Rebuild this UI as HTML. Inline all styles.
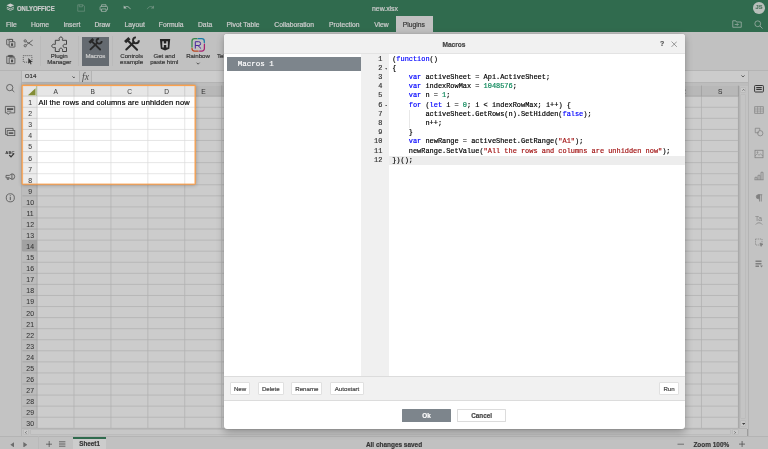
<!DOCTYPE html><html><head><meta charset="utf-8"><title>new.xlsx</title><style>
*{box-sizing:border-box;margin:0;padding:0}
html,body{width:768px;height:449px;overflow:hidden;background:#c4c4c4;font-family:"Liberation Sans",sans-serif;color:#444}
.abs{position:absolute}
#app{position:absolute;left:0;top:0;width:768px;height:449px;overflow:hidden;will-change:transform;filter:blur(0.35px);-webkit-text-stroke:0.18px}
#hdr{left:0;top:0;width:768px;height:31.8px;background:#3d8662}
.tab{position:absolute;top:20.5px;font-size:6.75px;line-height:8px;color:#fff;white-space:nowrap}
#tb{left:0;top:31.8px;width:768px;height:39.2px;background:#f2f2f2;border-bottom:1px solid #e2e2e2}
.sep{position:absolute;top:36.4px;height:29.6px;width:1px;background:#e9e9e9}
.btxt{position:absolute;font-size:6.1px;line-height:6.5px;text-align:center;color:#444;white-space:nowrap;transform:translateX(-50%)}
#fbar{left:21.6px;top:71px;width:726px;height:12px;background:#fff;border-bottom:1px solid #e2e2e2}
#lside{left:0;top:71px;width:21.6px;height:364.8px;background:#f4f4f4;border-right:1px solid #e2e2e2}
#rside{left:747.5px;top:71px;width:20.5px;height:364.8px;background:#f4f4f4;border-left:1px solid #e2e2e2}
#sbar{left:0;top:435.8px;width:768px;height:13.2px;background:#f2f2f2;border-top:1px solid #e2e2e2}
.ch{-webkit-text-stroke:0.06px;position:absolute;font-size:6.6px;line-height:10.8px;margin-top:1.1px;padding-left:0.5px;text-align:center;color:#444}
.rh{-webkit-text-stroke:0.06px;position:absolute;font-size:6.9px;line-height:11.07px;margin-top:1px;padding-left:0.8px;text-align:center;color:#444}
#dlg{left:223.5px;top:34.3px;width:461px;height:394.8px;background:#fff;border-radius:3px;box-shadow:0 2.8px 8.3px rgba(0,0,0,0.3),0 0 1px rgba(0,0,0,0.2);overflow:hidden}
.dbtn{position:absolute;top:348px;height:13px;background:#fff;border:1px solid #e0e0e0;border-radius:1px;font-size:6.15px;line-height:12.4px;text-align:center;color:#444;overflow:hidden}
.code{position:absolute;left:0;font-family:"Liberation Mono",monospace;font-size:6.93px;line-height:9.19px;white-space:pre;color:#000}
.ln{position:absolute;width:21px;text-align:right;font-family:"Liberation Mono",monospace;font-size:6.89px;line-height:9.19px;color:#333}
.k{color:#0000ff}.n{color:#098658}.s{color:#a31515}
</style></head><body><div id="app">
<div id="hdr" class="abs">
<svg class="abs" style="left:5.900px;top:3.400px" width="8.700" height="8.400" viewBox="0 0 17 17" preserveAspectRatio="none"><g fill="none" stroke="#fff" stroke-width="1.7" stroke-linejoin="round"><path d="M1.5 11.6 8.5 15l7-3.4"/><path d="M1.5 8.4 8.5 11.8l7-3.4"/></g><path d="M8.5 1 16 4.7 8.5 8.4 1 4.7z" fill="#fff"/></svg>
<div class="abs" style="left:17px;top:4.750px;font-size:6.700px;line-height:8px;font-weight:bold;color:#fff;transform-origin:0 50%;transform:scaleX(0.885)">ONLYOFFICE</div>
<svg class="abs" style="left:76.6px;top:4.2px;opacity:.4" width="8.4" height="8" viewBox="0 0 17 16"><path d="M1.5 1.5h10.5l3.5 3.2v9.8h-14z M4.5 1.5v4h6.5v-4" fill="none" stroke="#fff" stroke-width="1.4"/></svg>
<svg class="abs" style="left:99.4px;top:4px;opacity:.8" width="9.600" height="8.400" viewBox="0 0 18 17"><g fill="none" stroke="#fff" stroke-width="1.5"><path d="M4.5 5V1.5h9V5"/><rect x="1.5" y="5" width="15" height="7.5" rx="1.5"/><path d="M4.5 10h9v5.5h-9z" fill="#3d8662"/></g></svg>
<svg class="abs" style="left:122.600px;top:5.400px;opacity:.85" width="8.600" height="6.200" viewBox="0 0 16 12"><path d="M2 5.5c3-3.5 8.5-4 12 2.5" fill="none" stroke="#fff" stroke-width="1.6"/><path d="M1 1v6h6z" fill="#fff"/></svg>
<svg class="abs" style="left:146.200px;top:5.400px;opacity:.4" width="8.600" height="6.200" viewBox="0 0 16 12"><path d="M14 5.5c-3-3.5-8.5-4-12 2.5" fill="none" stroke="#fff" stroke-width="1.6"/><path d="M15 1v6h-6z" fill="#fff"/></svg>
<div class="abs" style="left:335px;top:4.800px;width:100px;text-align:center;font-size:6.900px;line-height:8px;color:#fff">new.xlsx</div>
<div class="abs" style="left:753.2px;top:2.1px;width:11.6px;height:11.6px;border-radius:50%;background:#e6efe9;color:#5f8f74;font-size:5.6px;line-height:11.8px;text-align:center;font-weight:bold">JS</div>
<div class="abs" style="left:396px;top:16px;width:36.500px;height:16px;background:#f2f2f2"></div>
<div class="tab" style="left:6.0px">File</div>
<div class="tab" style="left:30.9px">Home</div>
<div class="tab" style="left:63.4px">Insert</div>
<div class="tab" style="left:94.4px">Draw</div>
<div class="tab" style="left:124.6px">Layout</div>
<div class="tab" style="left:158.8px">Formula</div>
<div class="tab" style="left:198.0px">Data</div>
<div class="tab" style="left:226.6px">Pivot Table</div>
<div class="tab" style="left:274.3px">Collaboration</div>
<div class="tab" style="left:329.0px">Protection</div>
<div class="tab" style="left:374.2px">View</div>
<div class="tab" style="left:402.8px;color:#444">Plugins</div>
<svg class="abs" style="left:731.6px;top:20.2px;opacity:.75" width="10" height="8" viewBox="0 0 20 16"><path d="M1.5 14.5v-13h6l1.5 2.5h9.5v10.5z" fill="none" stroke="#fff" stroke-width="1.5"/><path d="M5.5 9h7m-2.5-2.5 2.5 2.5-2.5 2.5" fill="none" stroke="#fff" stroke-width="1.4"/></svg>
<svg class="abs" style="left:754.4px;top:19.6px;opacity:.75" width="9" height="9" viewBox="0 0 18 18"><circle cx="7.5" cy="7.5" r="5.8" fill="none" stroke="#fff" stroke-width="1.5"/><path d="M12 12l5 5" stroke="#fff" stroke-width="1.6"/></svg>
</div>
<div id="tb" class="abs"></div>
<div class="sep" style="left:39.5px"></div>
<div class="sep" style="left:78.2px"></div>
<div class="sep" style="left:112.3px"></div>
<div class="abs" style="left:82.2px;top:36.6px;width:27px;height:29.8px;background:#7d858c"></div>
<svg class="abs" style="left:0;top:0" width="768" height="449" viewBox="0 0 768 449"><g fill="none" stroke="#636363" stroke-width="0.85"><path d="M9 41.5V39.4h3.7v2.1"/><rect x="6.7" y="39.4" width="5.8" height="5.5" rx=".4"/><rect x="9.2" y="41.7" width="5.7" height="5.4" rx=".4" fill="#f2f2f2"/><rect x="11" y="43.3" width="2.1" height="2.6" fill="#666" stroke="none"/><circle cx="25.2" cy="40.9" r="1.15"/><circle cx="25.2" cy="45.7" r="1.15"/><path d="M26.2 41.6 32.6 45.6M26.2 45 32.6 40.2"/><path d="M8.8 56.2H6.8v7.2h2.3"/><path d="M8.6 55.4h3.8v1.4H8.600z" fill="#555"/><path d="M12.300 56.200h1.700v1.600"/><rect x="9.200" y="57.900" width="5.700" height="5.800" rx=".4" fill="#f2f2f2"/><rect x="11" y="59.600" width="2.100" height="2.700" fill="#666" stroke="none"/><path d="M23.300 55.600h8.600v6.600h-8.600z" stroke-dasharray="1.1 0.9" stroke-width=".8"/><path d="M28.300 58v5.800l1.400-1.300 1 2 .9-.5-1-1.900h1.800z" fill="#444" stroke="none"/></g><path d="M55.300 40.300H59.400V39.600A1.750 1.750 0 1 1 62.400 39.600V40.300H66.500V44.400H65.600A1.750 1.750 0 1 0 65.600 47.500H66.500V51.500H62.500V50.600A1.750 1.750 0 1 0 59.300 50.600V51.500H55.300V47.500H54.400A1.750 1.750 0 1 1 54.400 44.400H55.300Z" fill="none" stroke="#444" stroke-width="0.9" stroke-linejoin="round"/><g transform="translate(95.40 44.60) scale(1.000)" stroke="#333" fill="none"><path d="M-3.600 -3.300 4.700 4.900" stroke-width="1.850" stroke-linecap="round"/><path d="M-6 -1.800-2.100-5.500" stroke-width="2.700"/><path d="M-4.900 4.700 1.900-1.700" stroke-width="1.850" stroke-linecap="round"/><path d="M3.700-6.100A2.600 2.600 0 1 0 6.300-3.500" stroke-width="1.750"/></g><g transform="translate(131.80 44.20) scale(1.120)" stroke="#333" fill="none"><path d="M-3.600 -3.300 4.700 4.900" stroke-width="1.850" stroke-linecap="round"/><path d="M-6 -1.800-2.100-5.500" stroke-width="2.700"/><path d="M-4.900 4.700 1.900-1.700" stroke-width="1.850" stroke-linecap="round"/><path d="M3.700-6.100A2.600 2.600 0 1 0 6.300-3.500" stroke-width="1.750"/></g><path d="M159.900 39h10.300l-.9 9.800-4.250 1.800-4.250-1.800z" fill="#2e2e2e"/><path d="M162.300 41.300h1.500v2.300h2.500v-2.300h1.500v6.100h-1.500v-2.400h-2.500v2.400h-1.500z" fill="#fff"/><g fill="none" stroke-width="1.250" stroke-linecap="round"><path d="M192 47V41.200a2.500 2.500 0 0 1 2.500-2.500H197" stroke="#43a85a"/><path d="M198.200 38.700h3.600a2.500 2.500 0 0 1 2.500 2.500v1.300" stroke="#1d9bd1"/><path d="M204.400 44.200v4.300a2.500 2.500 0 0 1-2.500 2.500H199.600" stroke="#cf2a8c"/><path d="M198.200 51h-3.700a2.500 2.500 0 0 1-2.500-2.500v-.2" stroke="#ea5a2c"/><path d="M195.300 48.600V41.700h3.400a1.900 1.900 0 0 1 0 3.800h-3.400M198 45.600l3.100 3" stroke="#5a2fc2" stroke-width="1" stroke-linecap="butt"/></g><path d="M196.600 62.700l1.500 1.500 1.500-1.500" fill="none" stroke="#444" stroke-width=".8"/></svg>
<div class="btxt" style="left:59.300px;top:52.800px">Plugin<br>Manager</div>
<div class="btxt" style="left:95.400px;top:52.800px;color:#fff">Macros</div>
<div class="btxt" style="left:131.600px;top:52.800px">Controls<br>example</div>
<div class="btxt" style="left:164.300px;top:52.800px">Get and<br>paste html</div>
<div class="btxt" style="left:198px;top:52.800px">Rainbow</div>
<div class="btxt" style="left:217px;top:52.800px;transform:none;text-align:left">Telegram</div>
<div id="fbar" class="abs"></div>
<div class="abs" style="left:21.600px;top:71px;width:58.400px;height:11px;border-right:1px solid #e2e2e2;font-size:6.100px;line-height:10.600px;padding-left:3.200px;color:#444">O14</div>
<svg class="abs" style="left:71.700px;top:75.900px" width="3.800" height="2.500" viewBox="0 0 9 6"><path d="M1 1l3.500 3.500L8 1" fill="none" stroke="#444" stroke-width="1.900"/></svg>
<div class="abs" style="left:80px;top:71px;width:12px;height:11px;overflow:hidden;border-right:1px solid #e2e2e2;background:#fafafa;font-family:'Liberation Serif',serif;font-style:italic;font-size:9.600px;line-height:11.600px;text-align:center;color:#606060;-webkit-text-stroke:0">fx</div>
<svg class="abs" style="left:741px;top:75px" width="4" height="2.600" viewBox="0 0 9 6"><path d="M1 1l3.500 3.500L8 1" fill="none" stroke="#444" stroke-width="1.800"/></svg>
<div class="abs" style="left:21.600px;top:83px;width:726px;height:2.600px;background:#ededed"></div>
<div class="abs" style="left:22.40px;top:85.50px;width:716.10px;height:342.80px;background:#fff"></div>
<div class="abs" style="left:22.40px;top:85.50px;width:716.10px;height:10.70px;background:#e6e6e6"></div>
<div class="abs" style="left:22.40px;top:96.20px;width:14.70px;height:332.10px;background:#ececec"></div>
<div class="abs" style="left:22.40px;top:240.11px;width:14.70px;height:11.07px;background:#cbcbcb"></div>
<svg class="abs" style="left:0;top:0" width="768" height="449" viewBox="0 0 768 449"><path d="M37.10 107.27H738.50M37.10 118.34H738.50M37.10 129.41H738.50M37.10 140.48H738.50M37.10 151.55H738.50M37.10 162.62H738.50M37.10 173.69H738.50M37.10 184.76H738.50M37.10 195.83H738.50M37.10 206.90H738.50M37.10 217.97H738.50M37.10 229.04H738.50M37.10 240.11H738.50M37.10 251.18H738.50M37.10 262.25H738.50M37.10 273.32H738.50M37.10 284.39H738.50M37.10 295.46H738.50M37.10 306.53H738.50M37.10 317.60H738.50M37.10 328.67H738.50M37.10 339.74H738.50M37.10 350.81H738.50M37.10 361.88H738.50M37.10 372.95H738.50M37.10 384.02H738.50M37.10 395.09H738.50M37.10 406.16H738.50M37.10 417.23H738.50M37.10 428.30H738.50M74.01 96.20V428.30M110.92 96.20V428.30M147.83 96.20V428.30M184.74 96.20V428.30M221.65 96.20V428.30M258.56 96.20V428.30M295.47 96.20V428.30M332.38 96.20V428.30M369.29 96.20V428.30M406.20 96.20V428.30M443.11 96.20V428.30M480.02 96.20V428.30M516.93 96.20V428.30M553.84 96.20V428.30M590.75 96.20V428.30M627.66 96.20V428.30M664.57 96.20V428.30M701.48 96.20V428.30M738.39 96.20V428.30" fill="none" stroke="#dbdbdb" stroke-width="0.7"/><path d="M22.40 107.27H37.10M22.40 118.34H37.10M22.40 129.41H37.10M22.40 140.48H37.10M22.40 151.55H37.10M22.40 162.62H37.10M22.40 173.69H37.10M22.40 184.76H37.10M22.40 195.83H37.10M22.40 206.90H37.10M22.40 217.97H37.10M22.40 229.04H37.10M22.40 240.11H37.10M22.40 251.18H37.10M22.40 262.25H37.10M22.40 273.32H37.10M22.40 284.39H37.10M22.40 295.46H37.10M22.40 306.53H37.10M22.40 317.60H37.10M22.40 328.67H37.10M22.40 339.74H37.10M22.40 350.81H37.10M22.40 361.88H37.10M22.40 372.95H37.10M22.40 384.02H37.10M22.40 395.09H37.10M22.40 406.16H37.10M22.40 417.23H37.10M22.40 428.30H37.10M74.01 85.50V96.20M110.92 85.50V96.20M147.83 85.50V96.20M184.74 85.50V96.20M221.65 85.50V96.20M258.56 85.50V96.20M295.47 85.50V96.20M332.38 85.50V96.20M369.29 85.50V96.20M406.20 85.50V96.20M443.11 85.50V96.20M480.02 85.50V96.20M516.93 85.50V96.20M553.84 85.50V96.20M590.75 85.50V96.20M627.66 85.50V96.20M664.57 85.50V96.20M701.48 85.50V96.20M738.39 85.50V96.20M37.10 85.50V428.30M22.40 96.20H738.50" fill="none" stroke="#c4c4c4" stroke-width="0.7"/></svg>
<svg class="abs" style="left:22.40px;top:85.50px" width="14.70" height="10.70" viewBox="0 0 14.6 10.8"><path d="M13.500 2.300v7H5.900z" fill="#838d36"/><path d="M0 10.500H14.500V0" fill="none" stroke="#a9c088" stroke-width="0.8"/></svg>
<div class="ch" style="left:37.10px;top:85.50px;width:36.91px">A</div>
<div class="ch" style="left:74.01px;top:85.50px;width:36.91px">B</div>
<div class="ch" style="left:110.92px;top:85.50px;width:36.91px">C</div>
<div class="ch" style="left:147.83px;top:85.50px;width:36.91px">D</div>
<div class="ch" style="left:184.74px;top:85.50px;width:36.91px">E</div>
<div class="ch" style="left:221.65px;top:85.50px;width:36.91px">F</div>
<div class="ch" style="left:258.56px;top:85.50px;width:36.91px">G</div>
<div class="ch" style="left:295.47px;top:85.50px;width:36.91px">H</div>
<div class="ch" style="left:332.38px;top:85.50px;width:36.91px">I</div>
<div class="ch" style="left:369.29px;top:85.50px;width:36.91px">J</div>
<div class="ch" style="left:406.20px;top:85.50px;width:36.91px">K</div>
<div class="ch" style="left:443.11px;top:85.50px;width:36.91px">L</div>
<div class="ch" style="left:480.02px;top:85.50px;width:36.91px">M</div>
<div class="ch" style="left:516.93px;top:85.50px;width:36.91px">N</div>
<div class="ch" style="left:553.84px;top:85.50px;width:36.91px">O</div>
<div class="ch" style="left:590.75px;top:85.50px;width:36.91px">P</div>
<div class="ch" style="left:627.66px;top:85.50px;width:36.91px">Q</div>
<div class="ch" style="left:664.57px;top:85.50px;width:36.91px">R</div>
<div class="ch" style="left:701.48px;top:85.50px;width:36.91px">S</div>
<div class="rh" style="left:22.40px;top:96.20px;width:14.70px">1</div>
<div class="rh" style="left:22.40px;top:107.27px;width:14.70px">2</div>
<div class="rh" style="left:22.40px;top:118.34px;width:14.70px">3</div>
<div class="rh" style="left:22.40px;top:129.41px;width:14.70px">4</div>
<div class="rh" style="left:22.40px;top:140.48px;width:14.70px">5</div>
<div class="rh" style="left:22.40px;top:151.55px;width:14.70px">6</div>
<div class="rh" style="left:22.40px;top:162.62px;width:14.70px">7</div>
<div class="rh" style="left:22.40px;top:173.69px;width:14.70px">8</div>
<div class="rh" style="left:22.40px;top:184.76px;width:14.70px">9</div>
<div class="rh" style="left:22.40px;top:195.83px;width:14.70px">10</div>
<div class="rh" style="left:22.40px;top:206.90px;width:14.70px">11</div>
<div class="rh" style="left:22.40px;top:217.97px;width:14.70px">12</div>
<div class="rh" style="left:22.40px;top:229.04px;width:14.70px">13</div>
<div class="rh" style="left:22.40px;top:240.11px;width:14.70px">14</div>
<div class="rh" style="left:22.40px;top:251.18px;width:14.70px">15</div>
<div class="rh" style="left:22.40px;top:262.25px;width:14.70px">16</div>
<div class="rh" style="left:22.40px;top:273.32px;width:14.70px">17</div>
<div class="rh" style="left:22.40px;top:284.39px;width:14.70px">18</div>
<div class="rh" style="left:22.40px;top:295.46px;width:14.70px">19</div>
<div class="rh" style="left:22.40px;top:306.53px;width:14.70px">20</div>
<div class="rh" style="left:22.40px;top:317.60px;width:14.70px">21</div>
<div class="rh" style="left:22.40px;top:328.67px;width:14.70px">22</div>
<div class="rh" style="left:22.40px;top:339.74px;width:14.70px">23</div>
<div class="rh" style="left:22.40px;top:350.81px;width:14.70px">24</div>
<div class="rh" style="left:22.40px;top:361.88px;width:14.70px">25</div>
<div class="rh" style="left:22.40px;top:372.95px;width:14.70px">26</div>
<div class="rh" style="left:22.40px;top:384.02px;width:14.70px">27</div>
<div class="rh" style="left:22.40px;top:395.09px;width:14.70px">28</div>
<div class="rh" style="left:22.40px;top:406.16px;width:14.70px">29</div>
<div class="rh" style="left:22.40px;top:417.23px;width:14.70px">30</div>
<div class="abs" style="left:38.600px;top:97.10px;font-size:7.500px;letter-spacing:0.150px;line-height:11.070px;color:#000;white-space:nowrap">All the rows and columns are unhidden now</div>
<div class="abs" style="left:738.500px;top:85.500px;width:9px;height:343px;background:#f4f4f4;border-left:1px solid #e2e2e2"></div>
<div class="abs" style="left:739.800px;top:86.600px;width:6.600px;height:6.600px;background:#fcfcfc;border:1px solid #ebebeb;border-radius:1px"></div>
<svg class="abs" style="left:741.500px;top:89px" width="3.200" height="2" viewBox="0 0 8 5"><path d="M1 4l3-3 3 3" fill="none" stroke="#555" stroke-width="1.600"/></svg>
<div class="abs" style="left:739.800px;top:94.200px;width:6.600px;height:324.600px;background:#f5f5f5;border:1px solid #ebebeb;border-radius:1px"></div>
<div class="abs" style="left:739.800px;top:419.800px;width:6.600px;height:6.800px;background:#fcfcfc;border:1px solid #ebebeb;border-radius:1px"></div>
<svg class="abs" style="left:741.600px;top:422.600px" width="3.200" height="2" viewBox="0 0 8 5"><path d="M0 0h8L4 5z" fill="#555"/></svg>
<div class="abs" style="left:22.400px;top:428.400px;width:725.100px;height:7.400px;background:#f4f4f4;border-top:1px solid #e2e2e2"></div>
<div class="abs" style="left:22.600px;top:428.900px;width:6.900px;height:6.600px;background:#fcfcfc;border:1px solid #ebebeb;border-radius:1px"></div>
<svg class="abs" style="left:25.200px;top:430.600px" width="2" height="3.200" viewBox="0 0 5 8"><path d="M4 1 1 4l3 3" fill="none" stroke="#555" stroke-width="1.600"/></svg>
<div class="abs" style="left:30.400px;top:429.200px;width:700.600px;height:6px;background:#f9f9f9;border:1px solid #ebebeb;border-radius:1px"></div>
<div class="abs" style="left:731.800px;top:428.900px;width:7.400px;height:6.600px;background:#fcfcfc;border:1px solid #ebebeb;border-radius:1px"></div>
<svg class="abs" style="left:734.400px;top:430.600px" width="2" height="3.200" viewBox="0 0 5 8"><path d="M1 1l3 3-3 3" fill="none" stroke="#555" stroke-width="1.600"/></svg>
<div id="lside" class="abs"></div>
<div id="rside" class="abs"></div>
<svg class="abs" style="left:0;top:0" width="768" height="449" viewBox="0 0 768 449"><g fill="none" stroke="#6c6c6c" stroke-width="0.85"><circle cx="9.700" cy="87.600" r="3.150"/><path d="M12 89.900l2.300 2.100"/><path d="M5.400 106.400h9.300v6.500H9.600l-1.300 1.600-1-1.600H5.400z"/><path d="M7 108.300h6.200v1.600H7z" fill="#555" stroke="none"/><path d="M7 111.200h4.300" stroke-width=".7"/><path d="M7 134.500H5.500v-6.100h7.600v1.900"/><rect x="7.200" y="130.600" width="7.600" height="5" /><path d="M8.700 132.300h4.600v1.600H8.700z" fill="#666" stroke="none"/><text x="10" y="153.600" font-family="Liberation Sans, sans-serif" font-size="4.300" font-weight="bold" text-anchor="middle" fill="#444" stroke="none">ABC</text><path d="M9.300 155l1.700 1.800 3-3.300" stroke-width="1.150" stroke="#444"/><path d="M6 175.400h3.300l2.600-1.500v5.400l-2.600-1.500H6z"/><path d="M11.900 173.800a2.800 2.800 0 0 1 0 5.600"/><path d="M7.300 177.800v1.700h1.400v-1.700" stroke-width=".75"/><circle cx="10.300" cy="197.800" r="4.050"/><path d="M10.300 196.900v3.200M10.300 195.300v.9" stroke-width=".95"/></g></svg>
<svg class="abs" style="left:753.90px;top:83.60px;opacity:1" width="10" height="10" viewBox="0 0 20 20"><g fill="none" stroke="#444" stroke-width="1.500"><rect x="1.200" y="3" width="17.600" height="13" rx="1.500" stroke-width="2"/><path d="M4.500 7.200h11M4.500 11h11" stroke-width="2.200"/></g></svg>
<svg class="abs" style="left:753.90px;top:105.30px;opacity:0.47" width="10" height="10" viewBox="0 0 20 20"><g fill="none" stroke="#444" stroke-width="1.500"><rect x="1.500" y="3.500" width="17" height="13"/><path d="M1.500 8h17M1.500 12.200h17M7.200 3.500v13M12.800 3.500v13" stroke-width="1.100"/></g></svg>
<svg class="abs" style="left:753.90px;top:127.20px;opacity:0.47" width="10" height="10" viewBox="0 0 20 20"><g fill="none" stroke="#444" stroke-width="1.500"><path d="M10 11.500H2.500v-9h9v5"/><circle cx="12.500" cy="12.500" r="5.300"/></g></svg>
<svg class="abs" style="left:753.90px;top:149.10px;opacity:0.47" width="10" height="10" viewBox="0 0 20 20"><g fill="none" stroke="#444" stroke-width="1.500"><rect x="2" y="2.500" width="16" height="15"/><path d="M2 14l4.500-4.500 3.500 3 3-2.500 5 4" stroke-width="1.200"/><circle cx="7" cy="6.500" r="1" /></g></svg>
<svg class="abs" style="left:753.90px;top:171.00px;opacity:0.47" width="10" height="10" viewBox="0 0 20 20"><g fill="none" stroke="#444" stroke-width="1.500"><path d="M2 17.500v-5h4v5M8 17.500v-9h4v9M14 17.500v-15h4v15M1 17.500h18"/></g></svg>
<svg class="abs" style="left:753.90px;top:192.90px;opacity:0.47" width="10" height="10" viewBox="0 0 20 20"><g fill="none" stroke="#444" stroke-width="1.500"><path d="M11 17V3.500M14.500 17V3.500M16.500 3.500H8.500" stroke-width="1.700"/><path d="M11 3.500H8.500a4 4 0 0 0 0 8H11z" fill="#444"/></g></svg>
<svg class="abs" style="left:753.90px;top:214.80px;opacity:0.47" width="10" height="10" viewBox="0 0 20 20"><g fill="none" stroke="#444" stroke-width="1.500"><text x="9" y="11" font-family="Liberation Sans, sans-serif" font-size="13.500" text-anchor="middle" fill="#444" stroke="none">Ta</text><path d="M3.500 19c3.500-4.500 9.500-4.500 13 0" /></g></svg>
<svg class="abs" style="left:753.90px;top:236.70px;opacity:0.47" width="10" height="10" viewBox="0 0 20 20"><g fill="none" stroke="#444" stroke-width="1.500"><rect x="3" y="4" width="13" height="12" stroke-dasharray="2.500 1.800"/><path d="M12 12l6 3-3 .8-.8 3z" fill="#444"/></g></svg>
<svg class="abs" style="left:753.90px;top:258.60px;opacity:0.47" width="10" height="10" viewBox="0 0 20 20"><g fill="none" stroke="#444" stroke-width="1.500"><path d="M3 3h12v3H3zM3 8h12v3H3zM3 13h7v3H3z" fill="#444" stroke="none"/><path d="M12 13h6l-3 4z" fill="#444" stroke="none"/></g></svg>
<div id="sbar" class="abs"></div>
<svg class="abs" style="left:9.600px;top:441.700px" width="4.600" height="5.600" viewBox="0 0 8 10"><path d="M7.500 0v10L.5 5z" fill="#888"/></svg>
<svg class="abs" style="left:22.900px;top:441.700px" width="4.600" height="5.600" viewBox="0 0 8 10"><path d="M.5 0v10l7-5z" fill="#888"/></svg>
<div class="abs" style="left:38px;top:436.400px;width:1px;height:12.600px;background:#e8e8e8"></div>
<svg class="abs" style="left:46px;top:440.800px" width="6.400" height="6.400" viewBox="0 0 12 12"><path d="M6 0v12M0 6h12" stroke="#555" stroke-width="1.300"/></svg>
<svg class="abs" style="left:59.400px;top:441px" width="6.400" height="6" viewBox="0 0 12 11"><path d="M0 1h12M0 4h12M0 7h12M0 10h12" stroke="#666" stroke-width="1.200"/></svg>
<div class="abs" style="left:73.300px;top:436.600px;width:32.700px;height:12.400px;background:#fff;border-top:2px solid #3d8662;font-size:6.300px;font-weight:bold;line-height:9.600px;text-align:center;color:#444">Sheet1</div>
<div class="abs" style="left:344px;top:440px;width:100px;text-align:center;font-size:6.450px;font-weight:bold;line-height:10px;color:#444">All changes saved</div>
<svg class="abs" style="left:677px;top:441px" width="8" height="6" viewBox="0 0 8 6"><path d="M0.500 3.200H7" stroke="#707070" stroke-width="0.800"/></svg>
<div class="abs" style="left:681.300px;top:440.200px;width:60px;text-align:center;font-size:6.450px;font-weight:bold;line-height:9.600px;color:#444">Zoom 100%</div>
<svg class="abs" style="left:738.900px;top:441.100px" width="6.200" height="6.200" viewBox="0 0 12 12"><path d="M6 0v12M0 6h12" stroke="#606060" stroke-width="1.500"/></svg>
<div class="abs" style="left:22px;top:85px;width:173px;height:99px;box-shadow:0 0 0 2000px rgba(0,0,0,0.2),0 0 4.500px 0.500px rgba(0,0,0,0.28)"></div>
<svg class="abs" style="left:0;top:0" width="768" height="449" viewBox="0 0 768 449"><rect x="22.200" y="85.350" width="173" height="98.950" rx="0.800" fill="none" stroke="#e8944a" stroke-opacity=".18" stroke-width="2.400"/><rect x="22.200" y="85.350" width="173" height="98.950" rx="0.800" fill="none" stroke="#fba04c" stroke-width="1.150"/></svg>
<div id="dlg" class="abs">
<div class="abs" style="left:0;top:0;width:461px;height:19.300px;background:#f1f1f1;border-bottom:1px solid #e3e3e3;font-size:6.600px;font-weight:bold;line-height:22.200px;text-align:center;color:#444;overflow:hidden">Macros</div>
<div class="abs" style="left:436.600px;top:4.400px;font-size:7px;font-weight:bold;line-height:9px;color:#555">?</div>
<svg class="abs" style="left:447.200px;top:6.700px" width="6.400" height="6.400" viewBox="0 0 12 12"><path d="M1 1l10 10M11 1 1 11" stroke="#666" stroke-width="1.200"/></svg>
<div class="abs" style="left:3px;top:22.500px;width:134.600px;height:13.900px;overflow:hidden;background:#7d858c;color:#fff;font-family:'Liberation Mono',monospace;font-size:7.500px;line-height:15.300px;padding-left:11.200px">Macros 1</div>
<div class="abs" style="left:137.800px;top:19.900px;width:28px;height:322.100px;background:#f0f0f0"></div>
<div class="abs" style="left:165.800px;top:121.49px;width:296px;height:9.190px;background:#ededed"></div>
<div class="abs" style="left:185.600px;top:75.54px;width:0.5px;height:18.400px;background:#e8e8e8"></div>
<div class="ln" style="left:137.800px;top:20.40px">1</div>
<div class="code" style="left:168.700px;top:20.40px">(<span class="k">function</span>()</div>
<div class="ln" style="left:137.800px;top:29.59px">2</div>
<div class="code" style="left:168.700px;top:29.59px">{</div>
<div class="ln" style="left:137.800px;top:38.78px">3</div>
<div class="code" style="left:168.700px;top:38.78px">    <span class="k">var</span> activeSheet = Api.ActiveSheet;</div>
<div class="ln" style="left:137.800px;top:47.97px">4</div>
<div class="code" style="left:168.700px;top:47.97px">    <span class="k">var</span> indexRowMax = <span class="n">1048576</span>;</div>
<div class="ln" style="left:137.800px;top:57.16px">5</div>
<div class="code" style="left:168.700px;top:57.16px">    <span class="k">var</span> n = <span class="n">1</span>;</div>
<div class="ln" style="left:137.800px;top:66.35px">6</div>
<div class="code" style="left:168.700px;top:66.35px">    <span class="k">for</span> (<span class="k">let</span> i = <span class="n">0</span>; i &lt; indexRowMax; i++) {</div>
<div class="ln" style="left:137.800px;top:75.54px">7</div>
<div class="code" style="left:168.700px;top:75.54px">        activeSheet.GetRows(n).SetHidden(<span class="k">false</span>);</div>
<div class="ln" style="left:137.800px;top:84.73px">8</div>
<div class="code" style="left:168.700px;top:84.73px">        n++;</div>
<div class="ln" style="left:137.800px;top:93.92px">9</div>
<div class="code" style="left:168.700px;top:93.92px">    }</div>
<div class="ln" style="left:137.800px;top:103.11px">10</div>
<div class="code" style="left:168.700px;top:103.11px">    <span class="k">var</span> newRange = activeSheet.GetRange(<span class="s">"A1"</span>);</div>
<div class="ln" style="left:137.800px;top:112.30px">11</div>
<div class="code" style="left:168.700px;top:112.30px">    newRange.SetValue(<span class="s">"All the rows and columns are unhidden now"</span>);</div>
<div class="ln" style="left:137.800px;top:121.49px">12</div>
<div class="code" style="left:168.700px;top:121.49px">})();</div>
<svg class="abs" style="left:161px;top:33.59px" width="2.600" height="1.800" viewBox="0 0 6 4"><path d="M0 0h6L3 4z" fill="#666"/></svg>
<svg class="abs" style="left:161px;top:70.35px" width="2.600" height="1.800" viewBox="0 0 6 4"><path d="M0 0h6L3 4z" fill="#666"/></svg>
<div class="abs" style="left:0;top:342px;width:461px;height:24.300px;background:#f1f1f1;border-top:0.6px solid #dcdcdc;border-bottom:0.6px solid #dcdcdc"></div>
<div class="dbtn" style="left:6.30px;width:20.50px">New</div>
<div class="dbtn" style="left:34.50px;width:25.60px">Delete</div>
<div class="dbtn" style="left:67.80px;width:31.10px">Rename</div>
<div class="dbtn" style="left:106.40px;width:34.30px">Autostart</div>
<div class="dbtn" style="left:435.80px;width:19.50px">Run</div>
<div class="abs" style="left:178.500px;top:374.900px;width:49.200px;height:12.700px;background:#7d858c;color:#fff;font-size:6.350px;font-weight:bold;line-height:13.600px;text-align:center;border-radius:0.6px;overflow:hidden">Ok</div>
<div class="abs" style="left:233.500px;top:374.900px;width:49.300px;height:12.700px;background:#fff;border:1px solid #dcdcdc;color:#444;font-size:6.350px;font-weight:bold;line-height:11.300px;text-align:center;border-radius:0.6px;overflow:hidden">Cancel</div>
</div>
</div></body></html>
